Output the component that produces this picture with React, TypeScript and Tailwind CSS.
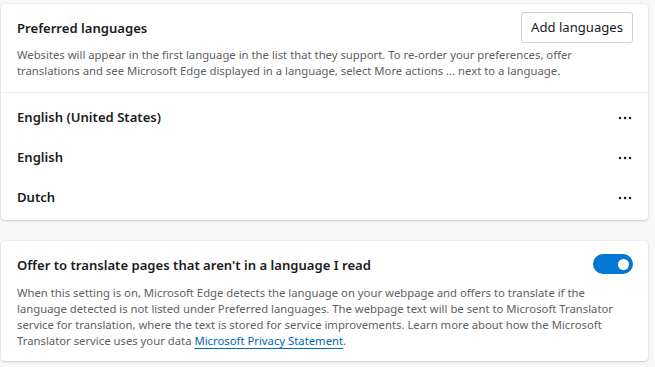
import React from "react";

const font = { fontFamily: '"Noto Sans", "Open Sans", sans-serif' };

function Dots() {
  return (
    <svg width="14" height="4" viewBox="0 0 14 4" className="text-[#1a1a1a]">
      <circle cx="2" cy="2" r="1.25" fill="currentColor" />
      <circle cx="7" cy="2" r="1.25" fill="currentColor" />
      <circle cx="12" cy="2" r="1.25" fill="currentColor" />
    </svg>
  );
}

const card = "bg-white rounded-[4px] shadow-[0_0_2px_rgba(0,0,0,0.12),0_1px_2px_rgba(0,0,0,0.14)]";

export default function App() {
  const langs = ["English (United States)", "English", "Dutch"];
  return (
    <div className="w-[655px] h-[367px] bg-[#f7f7f7] pt-[4px] pl-[1px] pr-[7px] overflow-hidden" style={font}>
      <div className={card}>
        <div className="flex items-start justify-between pl-[16px] pr-[15px] pt-[8px] pb-[13px] border-b border-[#ebebeb]">
          <div className="pt-[6px] flex-1 min-w-0">
            <div className="text-[13.1px] font-semibold text-[#1b1b1b] leading-[20px]">Preferred languages</div>
            <div className="text-[11.3px] text-[#616161] leading-[16px] mt-[9px] whitespace-nowrap">
              Websites will appear in the first language in the list that they support. To re-order your preferences, offer
              <br />
              translations and see Microsoft Edge displayed in a language, select More actions ... next to a language.
            </div>
          </div>
          <button className="h-[31px] w-[112px] border border-[#d1d1d1] rounded-[3px] bg-white text-[13.1px] text-[#1b1b1b] shrink-0">
            Add languages
          </button>
        </div>
        <div className="pt-[5px] pb-[2px]">
          {langs.map((l) => (
            <div key={l} className="h-[40px] flex items-center justify-between pl-[16px] pr-[16px]">
              <span className="text-[13.1px] font-semibold text-[#1b1b1b]">{l}</span>
              <Dots />
            </div>
          ))}
        </div>
      </div>

      <div className={`mt-[21px] ${card} pl-[16px] pr-[15px] pt-[14px] pb-[12px]`}>
        <div className="flex items-center justify-between h-[20px]">
          <div className="text-[13.1px] font-semibold text-[#1b1b1b] leading-[20px]">Offer to translate pages that aren't in a language I read</div>
          <div className="w-[40px] h-[20px] rounded-full bg-[#0078d4] flex items-center justify-end pr-[4px] -mt-[2px]">
            <div className="w-[11px] h-[11px] rounded-full bg-white" />
          </div>
        </div>
        <div className="text-[11.3px] text-[#616161] leading-[16px] mt-[10px] whitespace-nowrap">
          When this setting is on, Microsoft Edge detects the language on your webpage and offers to translate if the
          <br />
          language detected is not listed under Preferred languages. The webpage text will be sent to Microsoft Translator
          <br />
          service for translation, where the text is stored for service improvements. Learn more about how the Microsoft
          <br />
          Translator service uses your data{" "}
          <a className="text-[#0067b8] underline underline-offset-[3px] decoration-[#0067b8]">Microsoft Privacy Statement</a>.
        </div>
      </div>
    </div>
  );
}
